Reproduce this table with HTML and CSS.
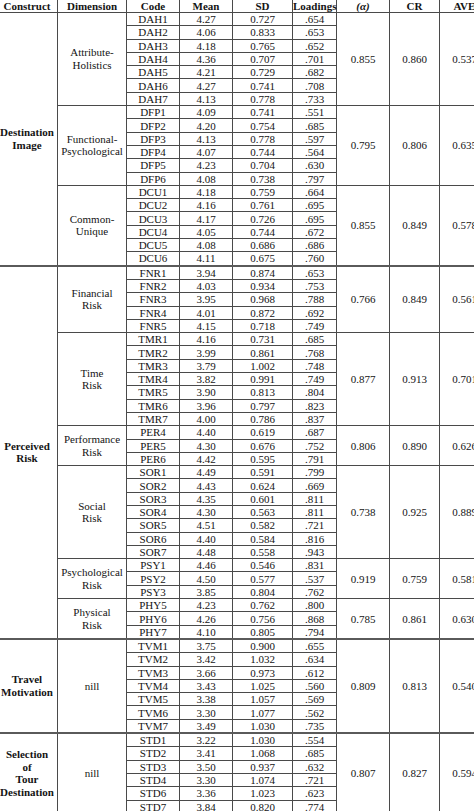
FILE: index.html
```html
<!DOCTYPE html>
<html>
<head>
<meta charset="utf-8">
<link rel="stylesheet" href="styles.css">
</head>
<body>
<table class="tbl">
<colgroup>
<col class="c-con"><col class="c-dim"><col class="c-code"><col class="c-mean"><col class="c-sd"><col class="c-load"><col class="c-a"><col class="c-cr"><col class="c-ave">
</colgroup>
<thead>
<tr class="head"><th>Construct</th><th>Dimension</th><th>Code</th><th>Mean</th><th>SD</th><th>Loadings</th><th><i>(α)</i></th><th>CR</th><th>AVE</th></tr>
</thead>
<tbody>
<tr><td class="con" rowspan="19">Destination<br>Image</td><td class="dim" rowspan="7">Attribute-<br>Holistics</td><td>DAH1</td><td>4.27</td><td>0.727</td><td>.654</td><td class="rel" rowspan="7">0.855</td><td class="rel" rowspan="7">0.860</td><td class="rel" rowspan="7">0.537</td></tr>
<tr><td>DAH2</td><td>4.06</td><td>0.833</td><td>.653</td></tr>
<tr><td>DAH3</td><td>4.18</td><td>0.765</td><td>.652</td></tr>
<tr><td>DAH4</td><td>4.36</td><td>0.707</td><td>.701</td></tr>
<tr><td>DAH5</td><td>4.21</td><td>0.729</td><td>.682</td></tr>
<tr><td>DAH6</td><td>4.27</td><td>0.741</td><td>.708</td></tr>
<tr><td>DAH7</td><td>4.13</td><td>0.778</td><td>.733</td></tr>
<tr><td class="dim" rowspan="6">Functional-<br>Psychological</td><td>DFP1</td><td>4.09</td><td>0.741</td><td>.551</td><td class="rel" rowspan="6">0.795</td><td class="rel" rowspan="6">0.806</td><td class="rel" rowspan="6">0.635</td></tr>
<tr><td>DFP2</td><td>4.20</td><td>0.754</td><td>.685</td></tr>
<tr><td>DFP3</td><td>4.13</td><td>0.778</td><td>.597</td></tr>
<tr><td>DFP4</td><td>4.07</td><td>0.744</td><td>.564</td></tr>
<tr><td>DFP5</td><td>4.23</td><td>0.704</td><td>.630</td></tr>
<tr><td>DFP6</td><td>4.08</td><td>0.738</td><td>.797</td></tr>
<tr><td class="dim" rowspan="6">Common-<br>Unique</td><td>DCU1</td><td>4.18</td><td>0.759</td><td>.664</td><td class="rel" rowspan="6">0.855</td><td class="rel" rowspan="6">0.849</td><td class="rel" rowspan="6">0.578</td></tr>
<tr><td>DCU2</td><td>4.16</td><td>0.761</td><td>.695</td></tr>
<tr><td>DCU3</td><td>4.17</td><td>0.726</td><td>.695</td></tr>
<tr><td>DCU4</td><td>4.05</td><td>0.744</td><td>.672</td></tr>
<tr><td>DCU5</td><td>4.08</td><td>0.686</td><td>.686</td></tr>
<tr><td>DCU6</td><td>4.11</td><td>0.675</td><td>.760</td></tr>

<tr class="grp"><td class="con" rowspan="28">Perceived<br>Risk</td><td class="dim" rowspan="5">Financial<br>Risk</td><td>FNR1</td><td>3.94</td><td>0.874</td><td>.653</td><td class="rel" rowspan="5">0.766</td><td class="rel" rowspan="5">0.849</td><td class="rel" rowspan="5">0.561</td></tr>
<tr><td>FNR2</td><td>4.03</td><td>0.934</td><td>.753</td></tr>
<tr><td>FNR3</td><td>3.95</td><td>0.968</td><td>.788</td></tr>
<tr><td>FNR4</td><td>4.01</td><td>0.872</td><td>.692</td></tr>
<tr><td>FNR5</td><td>4.15</td><td>0.718</td><td>.749</td></tr>
<tr><td class="dim" rowspan="7">Time<br>Risk</td><td>TMR1</td><td>4.16</td><td>0.731</td><td>.685</td><td class="rel" rowspan="7">0.877</td><td class="rel" rowspan="7">0.913</td><td class="rel" rowspan="7">0.701</td></tr>
<tr><td>TMR2</td><td>3.99</td><td>0.861</td><td>.768</td></tr>
<tr><td>TMR3</td><td>3.79</td><td>1.002</td><td>.748</td></tr>
<tr><td>TMR4</td><td>3.82</td><td>0.991</td><td>.749</td></tr>
<tr><td>TMR5</td><td>3.90</td><td>0.813</td><td>.804</td></tr>
<tr><td>TMR6</td><td>3.96</td><td>0.797</td><td>.823</td></tr>
<tr><td>TMR7</td><td>4.00</td><td>0.786</td><td>.837</td></tr>
<tr><td class="dim" rowspan="3">Performance<br>Risk</td><td>PER4</td><td>4.40</td><td>0.619</td><td>.687</td><td class="rel" rowspan="3">0.806</td><td class="rel" rowspan="3">0.890</td><td class="rel" rowspan="3">0.626</td></tr>
<tr><td>PER5</td><td>4.30</td><td>0.676</td><td>.752</td></tr>
<tr><td>PER6</td><td>4.42</td><td>0.595</td><td>.791</td></tr>
<tr><td class="dim" rowspan="7">Social<br>Risk</td><td>SOR1</td><td>4.49</td><td>0.591</td><td>.799</td><td class="rel" rowspan="7">0.738</td><td class="rel" rowspan="7">0.925</td><td class="rel" rowspan="7">0.889</td></tr>
<tr><td>SOR2</td><td>4.43</td><td>0.624</td><td>.669</td></tr>
<tr><td>SOR3</td><td>4.35</td><td>0.601</td><td>.811</td></tr>
<tr><td>SOR4</td><td>4.30</td><td>0.563</td><td>.811</td></tr>
<tr><td>SOR5</td><td>4.51</td><td>0.582</td><td>.721</td></tr>
<tr><td>SOR6</td><td>4.40</td><td>0.584</td><td>.816</td></tr>
<tr><td>SOR7</td><td>4.48</td><td>0.558</td><td>.943</td></tr>
<tr><td class="dim" rowspan="3">Psychological<br>Risk</td><td>PSY1</td><td>4.46</td><td>0.546</td><td>.831</td><td class="rel" rowspan="3">0.919</td><td class="rel" rowspan="3">0.759</td><td class="rel" rowspan="3">0.581</td></tr>
<tr><td>PSY2</td><td>4.50</td><td>0.577</td><td>.537</td></tr>
<tr><td>PSY3</td><td>3.85</td><td>0.804</td><td>.762</td></tr>
<tr><td class="dim" rowspan="3">Physical<br>Risk</td><td>PHY5</td><td>4.23</td><td>0.762</td><td>.800</td><td class="rel" rowspan="3">0.785</td><td class="rel" rowspan="3">0.861</td><td class="rel" rowspan="3">0.630</td></tr>
<tr><td>PHY6</td><td>4.26</td><td>0.756</td><td>.868</td></tr>
<tr><td>PHY7</td><td>4.10</td><td>0.805</td><td>.794</td></tr>

<tr class="grp"><td class="con" rowspan="7">Travel<br>Motivation</td><td class="dim" rowspan="7">nill</td><td>TVM1</td><td>3.75</td><td>0.900</td><td>.655</td><td class="rel" rowspan="7">0.809</td><td class="rel" rowspan="7">0.813</td><td class="rel" rowspan="7">0.540</td></tr>
<tr><td>TVM2</td><td>3.42</td><td>1.032</td><td>.634</td></tr>
<tr><td>TVM3</td><td>3.66</td><td>0.973</td><td>.612</td></tr>
<tr><td>TVM4</td><td>3.43</td><td>1.025</td><td>.560</td></tr>
<tr><td>TVM5</td><td>3.38</td><td>1.057</td><td>.569</td></tr>
<tr><td>TVM6</td><td>3.30</td><td>1.077</td><td>.562</td></tr>
<tr><td>TVM7</td><td>3.49</td><td>1.030</td><td>.735</td></tr>

<tr class="grp"><td class="con" rowspan="6">Selection<br>of<br>Tour<br>Destination</td><td class="dim" rowspan="6">nill</td><td>STD1</td><td>3.22</td><td>1.030</td><td>.554</td><td class="rel" rowspan="6">0.807</td><td class="rel" rowspan="6">0.827</td><td class="rel" rowspan="6">0.594</td></tr>
<tr><td>STD2</td><td>3.41</td><td>1.068</td><td>.685</td></tr>
<tr><td>STD3</td><td>3.50</td><td>0.937</td><td>.632</td></tr>
<tr><td>STD4</td><td>3.30</td><td>1.074</td><td>.721</td></tr>
<tr><td>STD6</td><td>3.36</td><td>1.023</td><td>.623</td></tr>
<tr><td>STD7</td><td>3.84</td><td>0.820</td><td>.774</td></tr>
</tbody>
</table>
</body>
</html>
```
FILE: styles.css
```css
html, body {
  margin: 0;
  padding: 0;
  background: #ffffff;
  overflow: hidden;
}
body {
  width: 474px;
  height: 811px;
}
.tbl {
  margin-left: -4px;
  border-collapse: collapse;
  table-layout: fixed;
  width: 493px;
  font-family: "Liberation Serif", "Times New Roman", serif;
  font-size: 11px;
  color: #141414;
}
.c-con { width: 61px; }
.c-dim { width: 69px; }
.c-code { width: 53px; }
.c-mean { width: 53px; }
.c-sd { width: 60px; }
.c-load { width: 44px; }
.c-a { width: 53px; }
.c-cr { width: 50px; }
.c-ave { width: 50px; }

.tbl th, .tbl td {
  padding: 0;
  text-align: center;
  vertical-align: middle;
  border: 1px solid #4a4a4a;
  line-height: 12px;
  white-space: nowrap;
  overflow: visible;
}
.tbl tbody td {
  height: 12.3px;
}
.head th {
  font-weight: bold;
  border-top: none;
  height: 12px;
  line-height: 12px;
}
.head th i {
  font-weight: bold;
}
.tbl td.con {
  font-weight: bold;
  line-height: 12.6px;
}
.tbl td.dim {
  line-height: 12.6px;
}
.tbl tr.grp td {
  border-top: 2px solid #5a5a5a;
}
```
